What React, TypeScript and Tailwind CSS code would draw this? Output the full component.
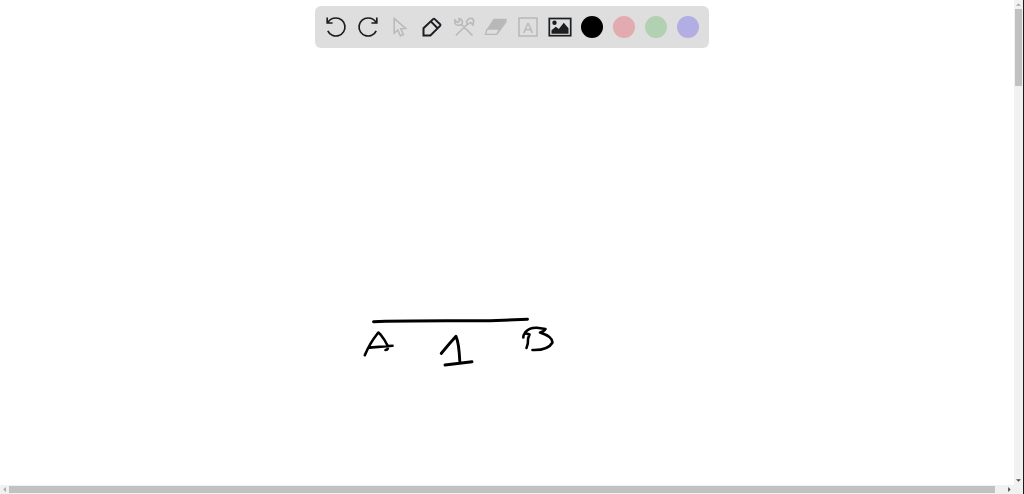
import { useState } from 'react';
import type { ReactNode } from 'react';

const COLORS = [
  { name: 'Black', className: 'bg-black' },
  { name: 'Red', className: 'bg-[#e2abb0]' },
  { name: 'Green', className: 'bg-[#b2d0b2]' },
  { name: 'Blue', className: 'bg-[#b2ade2]' },
];

function Icon({ children }: { children: ReactNode }) {
  return (
    <svg viewBox="0 0 24 24" className="size-6" fill="none" stroke="currentColor" strokeWidth="1.7" aria-hidden="true">
      {children}
    </svg>
  );
}

const TOOLS = [
  {
    name: 'Undo',
    active: true,
    icon: <Icon><path d="M3.2 2.6v5.400h5.400M3.600 7.800C5.200 5 8.400 3 12 3a9 9 0 1 1-8.200 12.800" /></Icon>,
  },
  {
    name: 'Redo',
    active: true,
    icon: <Icon><path d="M20.800 2.600v5.400h-5.400M20.400 7.800C18.800 5 15.600 3 12 3a9 9 0 1 0 8.200 12.800" /></Icon>,
  },
  {
    name: 'Select',
    active: false,
    icon: <Icon><path d="M6.200 3.500v14.700l3.600-3.200 2.600 5.800 3-1.300-2.600-5.700 4.900-.4z" strokeWidth="1.500" /></Icon>,
  },
  {
    name: 'Pen',
    active: true,
    icon: <Icon><path d="M3.500 20.500v-7.200l9.600-9.200q.8-.8 1.600 0l5.400 5.200q.8.8 0 1.600l-9.700 9.600zM10.800 6.400l6.800 6.800" strokeWidth="2" /></Icon>,
  },
  {
    name: 'Tools',
    active: false,
    icon: (
      <Icon>
        <path d="M3.800 20.500 15.500 9M20.500 20.500 9.500 9.500M3 5v3.500q1 2 3.500 1.700 3.500.3 4-2.700 0-3-3.500-4L7.500 6 5.500 7.500zM14.500 6.500l2.500-3h3.500l1.200 2-.7 4.500-2.500-2.500-3 2z" strokeWidth="1.500" />
      </Icon>
    ),
  },
  {
    name: 'Eraser',
    active: false,
    icon: (
      <Icon>
        <path d="M9.500 3.800H23.300l-7 10.200H3z" fill="currentColor" stroke="none" />
        <path d="M3 14 1.500 19.300h11.300L22.500 6M3 14h12.500l-2.700 5.300" strokeWidth="1.300" />
      </Icon>
    ),
  },
  {
    name: 'Text',
    active: false,
    icon: (
      <Icon>
        <rect x="3" y="3" width="18" height="18" strokeWidth="1.500" />
        <text x="12" y="17.500" textAnchor="middle" fontSize="15" fill="currentColor" stroke="none" className="font-['Liberation_Sans',sans-serif]">A</text>
      </Icon>
    ),
  },
  {
    name: 'Image',
    active: true,
    icon: (
      <Icon>
        <rect x="1.300" y="3.500" width="21.400" height="17.200" />
        <circle cx="6.500" cy="7.800" r="2.200" fill="currentColor" stroke="none" />
        <path d="M3.500 18.800v-3.500l4.300-3.600 3 2.400 5-6.300 4.700 5.500v5.500z" fill="currentColor" stroke="none" />
      </Icon>
    ),
  },
];

function Toolbar() {
  const [color, setColor] = useState('Black');

  return (
    <div role="toolbar" aria-label="Drawing tools" className="flex items-center gap-2 rounded-md bg-[#dedede] px-[9px] py-[9px] text-[#1c1e21]">
      {TOOLS.map((tool) => (
        <button key={tool.name} type="button" aria-label={tool.name} className={tool.active ? 'size-6' : 'size-6 text-[#b8b8b8]'}>
          {tool.icon}
        </button>
      ))}
      {COLORS.map((c) => (
        <button key={c.name} type="button" aria-label={c.name} aria-pressed={color === c.name} onClick={() => setColor(c.name)} className="flex size-6 items-center justify-center">
          <span className={`size-[22px] rounded-full ${c.className}`} />
        </button>
      ))}
    </div>
  );
}

function Sketch() {
  return (
    <svg width="220" height="80" viewBox="350 300 220 80" fill="none" stroke="#000" strokeWidth="2.900" strokeLinecap="round" strokeLinejoin="round" role="img" aria-label="Segment AB of length 1">
      <path d="M373.500 321.700C405 320.300 450 321 490 320.700L527.500 319.300" />
      <path d="M364.800 355.200Q370 343 376.800 334.500L378.300 332.500 380.500 334.500Q385 340 387.500 345.500 389 349.500 385.500 350M369.500 347.600 392.500 345.800" strokeWidth="2.600" />
      <path d="M441.200 353.500Q449 344 456 336.300 459 343 459.800 361.500M445 365 472 361.800" />
      <path d="M523.300 337.500Q523.300 333 526.500 333.500L529.500 334.500Q527.500 338 527.800 343.500L526.500 348M525 332.500Q529 327.500 537 327.800L545.500 329Q543.500 332 540 332.500 552.500 336.500 552.500 342.500 548 350.500 532.500 350" strokeWidth="2.600" />
    </svg>
  );
}

function Arrow({ className }: { className: string }) {
  return (
    <svg viewBox="0 0 8 8" className={`size-[9px] shrink-0 ${className}`} aria-hidden="true">
      <path d="M1.800 5.200 4 3l2.200 2.200z" fill="currentColor" />
    </svg>
  );
}

export default function App() {
  return (
    <div className="relative flex h-screen flex-col overflow-hidden bg-white">
      <div className="flex min-h-0 flex-1">
        <main className="relative min-w-0 flex-1 overflow-hidden">
          <div className="absolute left-[350px] top-[300px]">
            <Sketch />
          </div>
        </main>
        <div className="flex w-[10px] flex-col items-center border-r border-[#1c1c1c] bg-[#f1f1f1] text-[#505050]">
          <Arrow className="text-[#a3a3a3]" />
          <div className="flex min-h-0 w-full flex-1 flex-col px-px">
            <div className="h-[16.5%] bg-[#c1c1c1]" />
          </div>
          <Arrow className="rotate-180" />
        </div>
      </div>
      <div className="flex h-[9px] items-center border-r border-[#1c1c1c] bg-[#f1f1f1] pr-[9px] text-[#505050]">
        <Arrow className="-rotate-90 text-[#a3a3a3]" />
        <div className="flex h-full min-w-0 flex-1 py-px">
          <div className="w-[99%] bg-[#c1c1c1]" />
        </div>
        <Arrow className="rotate-90" />
      </div>
      <div className="absolute inset-x-0 top-[6px] flex justify-center pr-px">
        <Toolbar />
      </div>
    </div>
  );
}
